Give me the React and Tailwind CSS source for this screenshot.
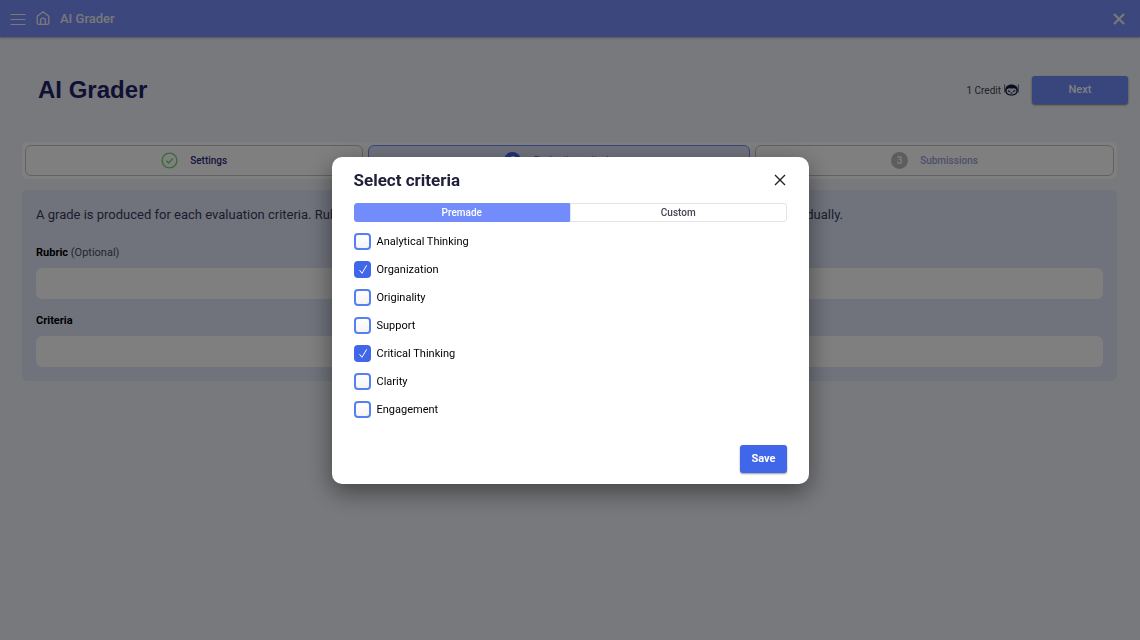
import { useState } from 'react';
import clsx from 'clsx';

const CRITERIA = [
  'Analytical Thinking',
  'Organization',
  'Originality',
  'Support',
  'Critical Thinking',
  'Clarity',
  'Engagement',
];

const MenuIcon = () => (
  <svg width="16" height="12" viewBox="0 0 16 12" stroke="currentColor" strokeWidth="1" fill="none">
    <path d="M0.5 1.5h15M0.5 6.5h15M0.5 11.5h15" />
  </svg>
);

const HomeIcon = () => (
  <svg width="14" height="16" viewBox="0 0 14 16" stroke="currentColor" strokeWidth="1.4" fill="none" strokeLinejoin="round">
    <path d="M1.2 5.2 7 0.8l5.800 4.400v6.600a1.600 1.600 0 0 1-1.600 1.600H2.800a1.600 1.600 0 0 1-1.600-1.600z" />
    <path d="M4.600 13.200V9.500a2.400 2.400 0 0 1 4.800 0v3.700" />
  </svg>
);

const RobotIcon = () => (
  <svg width="15" height="12" viewBox="0 0 15 12">
    <path d="M0.7 0.5v8M14.3 0.5v8" stroke="#17183c" strokeWidth="0.7" />
    <path d="M7.5 0.4c3.9 0 6.300 2.300 6.300 5.800s-2.400 5.400-6.300 5.400S1.200 9.700 1.200 6.200 3.600 0.400 7.500 0.400z" fill="#17183c" />
    <path d="M2.600 6.800c0-1.800 1-2.600 2.400-2.600 1 0 1.500.4 2.500.4s1.500-.4 2.500-.4c1.400 0 2.400.8 2.400 2.600 0 2.500-1.800 3.700-4.900 3.700s-4.900-1.200-4.900-3.700z" fill="#e4e8f8" />
    <path d="M4 6.900l2.200.6M9 7.500l2.200-1M6.400 9h2.200" stroke="#17183c" strokeWidth="1.100" />
  </svg>
);

const CloseIcon = ({ size, strokeWidth }) => (
  <svg width={size} height={size} viewBox="0 0 12 12" stroke="currentColor" strokeWidth={strokeWidth} fill="none">
    <path d="M1 1l10 10M11 1L1 11" />
  </svg>
);

const DoneIcon = () => (
  <svg width="17" height="17" viewBox="0 0 17 17" stroke="#72d86c" strokeWidth="1.4" fill="none">
    <circle cx="8.5" cy="8.5" r="7.4" />
    <path d="M5.3 8.7l2.3 2.2 4.2-4.4" />
  </svg>
);

const Step = ({ icon, label, active, className }) => (
  <button
    type="button"
    className={clsx(
      'flex h-[31px] flex-auto items-center justify-center gap-3 rounded-md border text-[10px] font-medium',
      active ? 'border-[#728cfb] bg-[#e0e6fb]' : 'border-[#c4c4c8] bg-white',
      className
    )}
  >
    {icon}
    {label}
  </button>
);

const StepNumber = ({ n, className }) => (
  <span className={clsx('flex h-[17px] w-[17px] items-center justify-center rounded-full text-[10px] text-white', className)}>
    {n}
  </span>
);

const CriteriaCheckbox = ({ label, checked, onChange }) => (
  <label className="flex items-center gap-[6px] text-[11px] leading-4 text-black">
    <span className="relative flex">
      <input
        type="checkbox"
        checked={checked}
        onChange={onChange}
        className="h-[17px] w-[17px] appearance-none rounded border-2 border-[#5580f5] bg-linear-to-b from-white to-[#f4f4f8] checked:border-[#4067ea] checked:bg-[#4067ea] checked:bg-none"
      />
      {checked && (
        <svg className="pointer-events-none absolute inset-0" width="17" height="17" viewBox="0 0 17 17" stroke="white" strokeWidth="1" fill="none">
          <path d="M5.5 9.2l2.5 3.1 4.7-8" />
        </svg>
      )}
    </span>
    {label}
  </label>
);

const CriteriaDialog = ({ onClose }) => {
  const [tab, setTab] = useState('Premade');
  const [selected, setSelected] = useState(['Organization', 'Critical Thinking']);

  const toggle = (name) =>
    setSelected((prev) => (prev.includes(name) ? prev.filter((n) => n !== name) : [...prev, name]));

  return (
    <div className="fixed inset-0 flex items-center justify-center bg-black/50 pt-px">
      <div
        role="dialog"
        aria-labelledby="criteria-title"
        className="w-full max-w-[477px] rounded-[10px] bg-white px-[22px] pt-3 pb-[11px] shadow-[0_8px_24px_rgba(0,0,0,0.45)]"
      >
        <div className="flex items-center justify-between">
          <h2 id="criteria-title" className="text-[17px] leading-[22px] font-bold text-[#20203a]">Select criteria</h2>
          <button type="button" aria-label="Close dialog" onClick={onClose} className="p-[1px] text-[#222]">
            <CloseIcon size={12} strokeWidth={1.4} />
          </button>
        </div>

        <div className="mt-3 flex">
          {['Premade', 'Custom'].map((name) => (
            <button
              key={name}
              type="button"
              onClick={() => setTab(name)}
              className={clsx(
                'h-[19px] flex-1 border text-[10px] leading-4 font-medium first:rounded-l-[3px] last:rounded-r-[3px]',
                tab === name ? 'border-[#728cfb] bg-[#728cfb] text-white' : 'border-[#e4e4e6] text-[#444455]'
              )}
            >
              {name}
            </button>
          ))}
        </div>

        <div className="mt-[11px] flex flex-col gap-[11px]">
          {CRITERIA.map((name) => (
            <CriteriaCheckbox key={name} label={name} checked={selected.includes(name)} onChange={() => toggle(name)} />
          ))}
        </div>

        <div className="mt-[27px] flex justify-end">
          <button type="button" onClick={onClose} className="h-7 rounded-[3px] bg-[#4067ea] px-[11px] text-[11px] font-bold text-white shadow-[0_1px_2px_rgba(0,0,0,0.4)]">
            Save
          </button>
        </div>
      </div>
    </div>
  );
};

const App = () => {
  const [open, setOpen] = useState(true);

  return (
    <div className="min-h-screen bg-[#f0f2f8] font-['Roboto',sans-serif]">
      <header className="flex h-[37px] items-center bg-[#788efc] px-[10px] text-[#f0f0f4] shadow-[0_1px_2px_rgba(0,0,0,0.3)]">
        <button type="button" aria-label="Menu"><MenuIcon /></button>
        <a href="#home" aria-label="Home" className="ml-[10px]"><HomeIcon /></a>
        <span className="ml-[10px] text-[13px] font-medium">AI Grader</span>
        <button type="button" aria-label="Close" className="mr-[5px] ml-auto">
          <CloseIcon size={12} strokeWidth={2.2} />
        </button>
      </header>

      <main className="pt-[39px]">
        <div className="flex h-7 items-center pr-3 pl-[38px]">
          <h1 className="font-['Liberation_Sans',sans-serif] text-2xl font-bold text-[#1f2268]">AI Grader</h1>
          <span className="ml-auto flex items-center gap-[3px] text-[10px] text-[#444455]">
            1 Credit <RobotIcon />
          </span>
          <button type="button" className="ml-[13px] h-7 w-24 rounded-[3px] bg-[#728cfb] text-[11px] font-medium text-white shadow-[0_1px_2px_rgba(0,0,0,0.5)]">
            Next
          </button>
        </div>

        <div className="mt-[38px] mr-[23px] ml-[22px]">
          <div className="flex gap-[5px] rounded-md bg-white p-[3px]">
            <Step icon={<DoneIcon />} label="Settings" className="text-[#2c2a78]" />
            <Step active icon={<StepNumber n={2} className="bg-[#4067ea]" />} label="Evaluation criteria" className="text-[#5f7df5]" />
            <Step icon={<StepNumber n={3} className="bg-[#bbbbbb]" />} label="Submissions" className="text-[#9a9ed8]" />
          </div>

          <section className="mt-[11px] rounded-md bg-[#e0e5f8] px-[14px] pt-4 pb-[14px]">
            <p className="truncate text-[13px] leading-[18px] text-[#3c3a5c]">
              A grade is produced for each evaluation criteria. Rubrics are optional and give the grader more to work from, so criteria is scored individually.
            </p>
            <label htmlFor="rubric" className="mt-[21px] block text-[11px] leading-4 font-bold text-black">
              Rubric <span className="font-normal text-[#4c4a64]">(Optional)</span>
            </label>
            <input id="rubric" type="text" className="mt-[7px] block h-[31px] w-full rounded-md bg-white px-3 text-xs" />
            <label htmlFor="criteria" className="mt-[14px] block text-[11px] leading-4 font-bold text-black">
              Criteria
            </label>
            <input id="criteria" type="text" className="mt-[7px] block h-[31px] w-full rounded-md bg-white px-3 text-xs" />
          </section>
        </div>
      </main>

      {open && <CriteriaDialog onClose={() => setOpen(false)} />}
    </div>
  );
};

export default App;
